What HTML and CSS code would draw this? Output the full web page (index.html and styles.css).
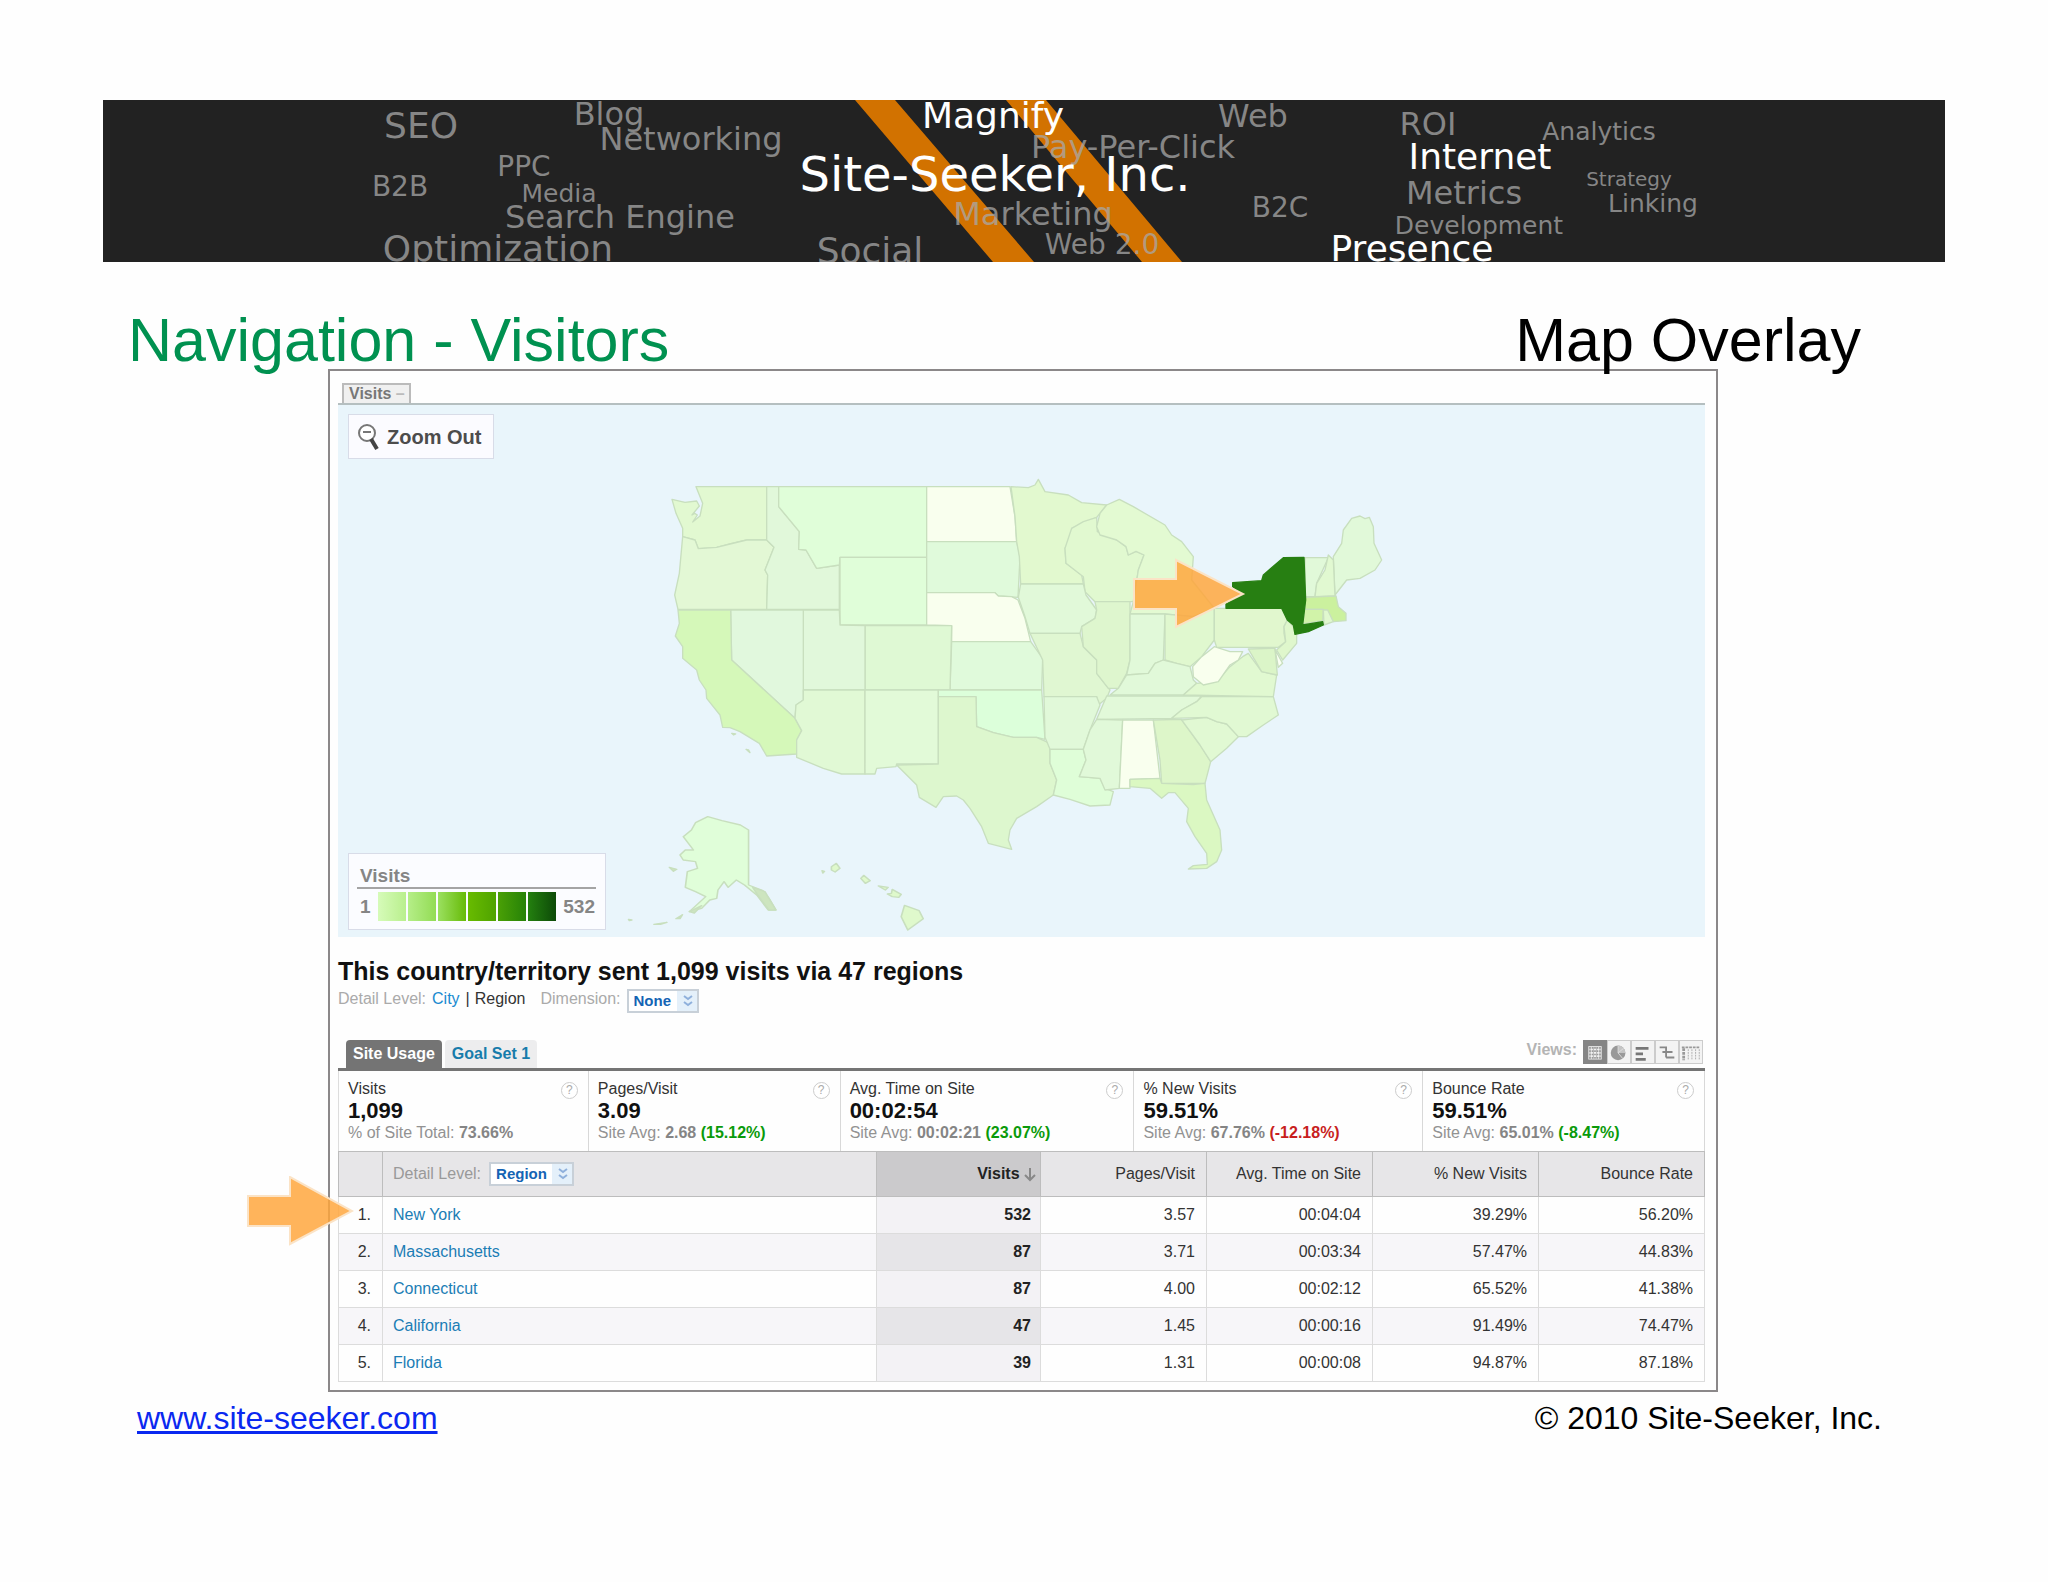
FILE: index.html
```html
<!DOCTYPE html>
<html lang="en">
<head>
<meta charset="utf-8">
<meta name="viewport" content="width=device-width, initial-scale=1">
<title>Navigation - Visitors: Map Overlay</title>
<link rel="stylesheet" href="styles.css">
</head>
<body>
<header class="banner">
<svg class="banner-art" viewBox="0 0 1842 162" role="img" aria-label="Site-Seeker, Inc.">
<path class="stripe" d="M752 0H792L931 162H890ZM903 0H943L1079 162H1039Z"/>
<g class="cloud">
<text class="w5" x="318" y="38">SEO</text>
<text class="w4" x="506" y="25">Blog</text>
<text class="w4" x="588" y="50">Networking</text>
<text class="w4" x="1150" y="27">Web</text>
<text class="w4" x="1325" y="35">ROI</text>
<text class="w2" x="1496" y="40">Analytics</text>
<text class="w3" x="421" y="76">PPC</text>
<text class="w4" x="1030" y="58">Pay-Per-Click</text>
<text class="w3" x="297" y="96">B2B</text>
<text class="w2" x="456" y="102">Media</text>
<text class="w4" x="1361" y="104">Metrics</text>
<text class="w1" x="1526" y="86">Strategy</text>
<text class="w4" x="517" y="128">Search Engine</text>
<text class="w4" x="930" y="125">Marketing</text>
<text class="w3" x="1177" y="117">B2C</text>
<text class="w2" x="1550" y="112">Linking</text>
<text class="w2" x="1376" y="134">Development</text>
<text class="w5" x="395" y="161">Optimization</text>
<text class="w5" x="767" y="163">Social</text>
<text class="w3" x="999" y="154">Web 2.0</text>
</g>
<g class="cloud cloud-strong">
<text class="w5" x="890" y="28">Magnify</text>
<text class="w5" x="1377" y="69">Internet</text>
<text class="w6" x="892" y="91">Site-Seeker, Inc.</text>
<text class="w5" x="1309" y="161">Presence</text>
</g>
</svg>
</header>

<div class="titles">
<h1 class="title-section">Navigation - Visitors</h1>
<p class="title-page">Map Overlay</p>
</div>

<main class="report">
<div class="metric-bar"><button class="metric-tab" type="button">Visits <span class="dash">–</span></button></div>

<section class="map" aria-label="Visits by region">
<svg class="map-art" viewBox="338 405 1367 532" aria-hidden="true">
<g class="states" transform="translate(650 460) scale(.33333)">
<path fill="#e2f9d1" d="M138 80H350V240H290L240 252L200 262L145 266L135 240L98 230V205L78 160L66 118L105 127L140 123L148 138L126 165L134 160L142 165L128 186L150 168L158 130Z"/>
<path fill="#e3f8d5" d="M98 230L135 240L145 266L200 262L240 252L290 240H350L372 262L345 330L353 345L350 448H84L74 405L88 340Z"/>
<path fill="#e1f8da" d="M350 80H386V140L448 215L446 268L468 270L500 325L568 315V448H350L353 345L345 330L372 262L350 240Z"/>
<path fill="#e0fed9" d="M386 80H830V292H570L568 315L500 325L468 270L446 268L448 215L386 140Z"/>
<path fill="#e0fed9" d="M570 292H830V495H570Z"/>
<path fill="#f9ffee" d="M830 80H1080L1095 170L1100 245H830Z"/>
<path fill="#e0fadb" d="M830 245H1100L1110 290L1104 412L1045 408L1035 398H830Z"/>
<path fill="#f9ffee" d="M830 398H1035L1045 408L1085 410L1104 420L1125 475L1142 545H905V497L830 495Z"/>
<path fill="#e0fadb" d="M905 545H1142L1178 595L1175 690H900Z"/>
<path fill="#dff9d4" d="M645 497H905L900 690H645Z"/>
<path fill="#e1f8db" d="M460 450H568L570 495L645 497V690H460Z"/>
<path fill="#e1f8dd" d="M242 450H460V720L438 735L435 775L245 600Z"/>
<path fill="#d5f8b9" d="M84 450H242L245 600L435 775L455 812L440 840V882L350 888L328 850L270 815L240 803L218 802L210 765L170 715L168 690L148 660L140 630L98 595V560L76 528L88 490Z"/>
<path fill="#e1f9d5" d="M460 690H645V942H575L520 925L440 892V840L455 812L435 775L438 735L460 720Z"/>
<path fill="#e2fad8" d="M645 690H865V912H740L738 920L680 925L675 942H645Z"/>
<path fill="#dcffda" d="M865 690H1175L1185 838L1160 832H1090L1030 818L980 800L978 710H865Z"/>
<path fill="#ddf7ce" d="M865 710H978L980 800L1030 818L1090 832H1160L1200 850V910L1220 960L1210 1005L1160 1040L1100 1075L1080 1110L1075 1140L1085 1168L1015 1150L995 1100L960 1045L940 1020L920 1008L880 1010L858 1042L808 1012L800 975L740 915L865 912Z"/>
<path fill="#c9dfbf" d="M245 820l12 2-6 3zM288 868l8 2 4 8z"/>
</g>
<g class="states" transform="translate(1000 460) scale(.33333)">
<path fill="#e2f9cf" d="M33 80L85 83L105 75L115 58L135 95L205 105L245 128L320 135L290 172L215 205V230L195 265L198 310L245 345L250 372H62L58 290L50 245L45 170Z"/>
<path fill="#e1f9d0" d="M215 205L250 185L290 172L292 215L350 240L378 260L385 285L408 274L432 285L415 330L400 425H285L255 395L250 350L198 310L195 265Z"/>
<path fill="#e3fad2" d="M320 135L358 118L400 140L495 195L515 225L545 245L580 290L575 360L643 445L580 470L490 462H390L400 425L415 330L432 285L408 274L385 285L378 260L350 240L300 225L290 200L300 160Z"/>
<path fill="#e1f9d9" d="M62 372H250L258 405L290 450L285 475L245 500L240 520H90L75 470L55 412Z"/>
<path fill="#e0f7d2" d="M90 520H240L250 560L290 600V640L330 690L320 715L295 735L290 710H132L128 600Z"/>
<path fill="#def6ce" d="M285 425H390V600L380 640L355 685H325L290 640V600L250 560L245 500L285 475L290 450Z"/>
<path fill="#e1f9d9" d="M390 462H495L490 600L465 610L445 640L380 645L390 600Z"/>
<path fill="#e0f8cf" d="M495 462L580 470L643 445V540L605 590L570 620L530 610L495 600Z"/>
<path fill="#e1f9d9" d="M355 685L380 645L445 640L465 610L490 600L530 610L570 620L580 660L590 670L550 705H330Z"/>
<path fill="#e2f9d9" d="M320 708H605L590 725L545 750L515 775L290 778Z"/>
<path fill="#e1f9d9" d="M132 710H290L300 735L270 810L250 868H150L135 832Z"/>
<path fill="#dffed8" d="M150 868H250L258 900L238 950L300 955L315 985L340 995L330 1035L270 1038L210 1018L160 1005L170 960L150 910Z"/>
<path fill="#e1f9d9" d="M290 778L368 780L358 985L315 990L300 955L238 950L258 900L250 868L270 810Z"/>
<path fill="#f9ffee" d="M368 780H460L480 955L390 958V985H358Z"/>
<path fill="#ddf6c9" d="M460 780L545 778L600 855L632 905L615 970H485L480 900Z"/>
<path fill="#dbf8c2" d="M390 958L480 955L485 970L580 974L615 970L620 1020L660 1110L665 1170L650 1205L620 1225L565 1227L580 1217L622 1213L620 1180L585 1130L560 1085L565 1045L525 998L505 998L485 1015L450 985L390 980Z"/>
<path fill="#e1f9d3" d="M545 780L620 772L650 785L680 792L715 830L680 865L632 905L600 855Z"/>
<path fill="#e1f9d3" d="M605 710H820L835 765L790 795L740 830H715L680 792L650 785L620 772L515 775L545 750L590 725Z"/>
<path fill="#e1f9d1" d="M550 705L590 670L650 665L690 620L728 590L745 580L785 635L830 645L820 710Z"/>
<path fill="#f9ffee" d="M643 560L690 575L728 575L715 600L690 615L655 665L610 675L580 650L578 620L605 590Z"/>
<path fill="#e1f7ce" d="M643 445H845L862 480L852 500V520L857 545L835 562H650L643 540Z"/>
<path fill="#dff7cc" d="M862 480L890 510V550L848 600L830 570L857 545L852 500Z"/>
<path fill="#dbf5c8" d="M745 567L825 565L832 645L785 635Z"/>
<path fill="#fafff4" d="M825 568L848 610L835 622Z"/>
<path fill="#e1f9d9" d="M915 293H985L950 370L945 410H915ZM1000 290L1025 250L1030 210L1055 175L1080 168L1095 176L1108 172L1120 200L1122 250L1145 300L1125 330L1080 355L1040 360L1005 405Z"/>
<path fill="#e1f9d1" d="M985 285L1000 300L1005 408L945 410L950 370L975 330Z"/>
<path fill="#cbf19e" d="M915 412L1008 408L1015 440L1038 460V482L1000 485L970 448H915Z"/>
<path fill="#d1f3a9" d="M912 448H970L968 482L910 492Z"/>
<path fill="#e0f8cf" d="M970 450H983L1000 485L972 495Z"/>
<path class="state-top" d="M698 368L785 362L790 345L850 293L912 292L917 420L908 495L968 485L970 495L925 515L885 523L880 495L862 480L845 445H678V432L730 402L698 380Z"/>
</g>
<g class="states" fill="#e0fed9" transform="translate(320 800) scale(.40816 .33333)">
<path d="M950 50L985 62L1030 75L1050 90V255L1085 272L1100 295L1117 330H1098L1070 285L1040 255L1020 240L1000 262L990 245L975 270L972 295L955 300L935 325L905 335L945 290L920 275L895 262L900 215L925 205L920 185L890 180L882 165L895 150L915 150L890 110L910 90L920 68Z"/>
<path fill="#cde5bf" d="M1060 262L1090 275L1117 330H1100L1075 290ZM905 335l30-18-18 22zM872 356l16-12-6 12zM818 373l32-6-16 6zM756 358l8 2-6 2zM856 202l18 6-8 6z"/>
<path fill="#dff9cc" d="M1253 200L1265 190L1274 205L1262 216L1253 210ZM1325 235L1332 226L1348 242L1336 250ZM1368 258L1392 262L1385 270ZM1390 282L1400 280L1402 268L1424 283L1418 292L1402 290ZM1432 316L1468 332L1478 356L1440 390L1424 350ZM1230 212l6 2-4 5z"/>
</g>
<path class="pointer" d="M1134 579H1176V560L1243 594L1176 627V609H1134Z"/>
</svg>
<button class="zoom-out" type="button">
<svg width="24" height="28" viewBox="0 0 24 28" aria-hidden="true"><circle cx="10" cy="10" r="8" fill="#fff" stroke="#777" stroke-width="2"/><path d="M6 9H14" stroke="#777" stroke-width="2"/><path d="M14 16L20 26" stroke="#444" stroke-width="4"/></svg>
Zoom Out</button>
<div class="legend">
<div class="legend-title">Visits</div>
<div class="legend-scale"><span>1</span><span class="ramp"><i class="s1"></i><i class="s2"></i><i class="s3"></i><i class="s4"></i><i class="s5"></i><i class="s6"></i></span><span>532</span></div>
</div>
</section>

<h2 class="summary">This country/territory sent 1,099 visits via 47 regions</h2>
<div class="levels">
<span class="muted">Detail Level:</span><a class="city" href="#city">City</a><span class="bar">|</span><span class="current">Region</span>
<label class="muted dim" for="dimension">Dimension:</label>
<span class="picker"><select id="dimension"><option>None</option></select><svg class="chevrons" viewBox="0 0 10 12" aria-hidden="true"><path d="M1 1L5 4L9 1M1 7L5 10L9 7"/></svg></span>
</div>

<div class="tabs">
<button class="tab tab-on" type="button">Site Usage</button>
<button class="tab" type="button">Goal Set 1</button>
<div class="views"><span>Views:</span>
<button class="view view-on" type="button" aria-label="Table"><svg viewBox="0 0 24 24"><path fill="#f2f2f2" d="M4 5H20V21H4Z"/><path stroke="#999" stroke-width="2" stroke-dasharray="2 1" fill="none" d="M5 7H19M5 11H19M5 15H19M5 19H19"/><path stroke="#a4a4a4" fill="none" d="M6 6V20M10 6V20M14 6V20M18 6V20"/></svg></button>
<button class="view" type="button" aria-label="Percentage"><svg viewBox="0 0 24 24"><circle cx="11" cy="13" r="8" fill="#999"/><path fill="#c4c4c4" d="M11 13V5A8 8 0 0 1 19 13Z"/><path stroke="#ddd" fill="none" d="M11 5V13L17 8M11 13L16 19"/></svg></button>
<button class="view" type="button" aria-label="Performance"><svg viewBox="0 0 24 24"><path stroke="#777" stroke-width="3" d="M4 8H18M4 14H12M4 20H15"/></svg></button>
<button class="view" type="button" aria-label="Comparison"><svg viewBox="0 0 24 24"><path stroke="#888" stroke-width="2" fill="none" d="M4 7H12M11 7V18M7 12H18M11 18H20"/></svg></button>
<button class="view" type="button" aria-label="Pivot"><svg viewBox="0 0 24 24"><path stroke="#999" stroke-width="2" stroke-dasharray="3 1" fill="none" d="M2 7H22"/><path stroke="#999" stroke-width="3" stroke-dasharray="3 1" d="M4 8V21"/><path stroke="#aaa" stroke-dasharray="2 1" fill="none" d="M9 9V21M13 9V21M17 9V21M21 9V21"/></svg></button>
</div>
</div>

<div class="stats">
<div class="stat"><div class="name">Visits</div><div class="value">1,099</div><div class="note">% of Site Total: <b>73.66%</b></div><button class="help" type="button">?</button></div>
<div class="stat"><div class="name">Pages/Visit</div><div class="value">3.09</div><div class="note">Site Avg: <b>2.68 <span class="up">(15.12%)</span></b></div><button class="help" type="button">?</button></div>
<div class="stat"><div class="name">Avg. Time on Site</div><div class="value">00:02:54</div><div class="note">Site Avg: <b>00:02:21 <span class="up">(23.07%)</span></b></div><button class="help" type="button">?</button></div>
<div class="stat"><div class="name">% New Visits</div><div class="value">59.51%</div><div class="note">Site Avg: <b>67.76% <span class="down">(-12.18%)</span></b></div><button class="help" type="button">?</button></div>
<div class="stat"><div class="name">Bounce Rate</div><div class="value">59.51%</div><div class="note">Site Avg: <b>65.01% <span class="up">(-8.47%)</span></b></div><button class="help" type="button">?</button></div>
</div>

<div class="table-wrap">
<table class="regions">
<colgroup><col class="c-rank"><col><col class="c-sorted"><col class="c-num"><col class="c-num"><col class="c-num"><col class="c-num"></colgroup>
<thead><tr><th></th><th class="left"><div class="level-pick"><label class="muted" for="level">Detail Level:</label><span class="picker"><select id="level"><option>Region</option></select><svg class="chevrons" viewBox="0 0 10 12" aria-hidden="true"><path d="M1 1L5 4L9 1M1 7L5 10L9 7"/></svg></span></div></th><th class="sorted">Visits <svg width="12" height="14" viewBox="0 0 12 14" aria-hidden="true"><path d="M6 0V12M1 7L6 12L11 7" fill="none" stroke="#888" stroke-width="2"/></svg></th><th>Pages/Visit</th><th>Avg. Time on Site</th><th>% New Visits</th><th>Bounce Rate</th></tr></thead>
<tbody>
<tr><td>1.</td><td class="left"><a href="#ny">New York</a></td><td class="sorted">532</td><td>3.57</td><td>00:04:04</td><td>39.29%</td><td>56.20%</td></tr>
<tr><td>2.</td><td class="left"><a href="#ma">Massachusetts</a></td><td class="sorted">87</td><td>3.71</td><td>00:03:34</td><td>57.47%</td><td>44.83%</td></tr>
<tr><td>3.</td><td class="left"><a href="#ct">Connecticut</a></td><td class="sorted">87</td><td>4.00</td><td>00:02:12</td><td>65.52%</td><td>41.38%</td></tr>
<tr><td>4.</td><td class="left"><a href="#ca">California</a></td><td class="sorted">47</td><td>1.45</td><td>00:00:16</td><td>91.49%</td><td>74.47%</td></tr>
<tr><td>5.</td><td class="left"><a href="#fl">Florida</a></td><td class="sorted">39</td><td>1.31</td><td>00:00:08</td><td>94.87%</td><td>87.18%</td></tr>
</tbody>
</table>
<svg class="row-pointer" width="108" height="70" viewBox="0 0 108 70" aria-hidden="true"><path class="pointer" d="M2 20H44V1L106 35L44 68V50H2Z"/></svg>
</div>
</main>

<footer class="footer"><a href="#home">www.site-seeker.com</a><span>© 2010 Site-Seeker, Inc.</span></footer>
</body>
</html>
```
FILE: styles.css
```css
* { box-sizing: border-box; }
body { margin: 0; padding-bottom: 100px; background: #fefefe; color: #333; font: 16px/20px "Liberation Sans", Arial, sans-serif; }
button, select { font: inherit; color: inherit; margin: 0; }
h1, h2, p { margin: 0; font-weight: normal; }

.banner { margin: 100px 103px 0; background: #222; }
.banner-art { display: block; width: 100%; overflow: hidden; }
.stripe { fill: #d27200; }
.cloud { fill: #a8a8a8; fill-opacity: .75; font-family: "DejaVu Sans", sans-serif; text-anchor: middle; }
.cloud-strong { fill: #fff; fill-opacity: 1; }
.w1 { font-size: 20px; }
.w2 { font-size: 25px; }
.w3 { font-size: 28px; }
.w4 { font-size: 32px; }
.w5 { font-size: 36px; }
.w6 { font-size: 48px; }

.titles { position: relative; z-index: 1; display: flex; justify-content: space-between; padding: 50px 187px 0 128px; font-size: 61px; line-height: 57px; }
.title-section { font-size: inherit; color: #009150; }
.title-page { color: #000; }

.report { margin: 0 330px 0 328px; padding: 12px 11px 8px 8px; border: 2px solid #8b8889; }
.metric-bar { display: flex; padding-left: 4px; border-bottom: 2px solid #b5bfc0; }
.metric-tab { height: 20px; padding: 0 4px 0 5px; border: 2px solid #bbb; border-bottom: 0; background: #f0f0f0; color: #777; font-size: 16px; font-weight: bold; line-height: 18px; }
.dash { color: #bbb; }

.map { position: relative; background: #e9f5fb; }
.map-art { display: block; width: 100%; }
.states { stroke: #c8dfbe; stroke-width: 4; stroke-linejoin: round; }
.state-top { fill: #277f12; stroke: #277f12; }
.pointer { fill: #ffa63c; fill-opacity: .84; stroke: #fbe3c6; stroke-width: 2; }
.zoom-out { position: absolute; left: 10px; top: 9px; display: flex; align-items: center; gap: 6px; height: 45px; padding: 0 12px 0 8px; border: 1px solid #d8dce8; background: #fbfbff; color: #4c4c4c; font-size: 20px; font-weight: bold; }
.legend { position: absolute; left: 10px; bottom: 7px; width: 258px; height: 77px; padding: 12px 9px 0 8px; border: 1px solid #d8dce8; background: #fbfcff; color: #858585; font-size: 19px; font-weight: bold; }
.legend-title { height: 23px; padding-left: 3px; border-bottom: 2px solid #a4a4a4; }
.legend-scale { display: flex; align-items: center; justify-content: space-between; padding: 3px 1px 0 3px; line-height: 29px; }
.ramp { display: flex; gap: 2px; }
.ramp i { width: 28px; height: 29px; }
.s1 { background: linear-gradient(90deg, #d6fbb9, #b9ef8d); }
.s2 { background: linear-gradient(90deg, #b5ee88, #93dc55); }
.s3 { background: linear-gradient(90deg, #9be060, #67bb08); }
.s4 { background: linear-gradient(90deg, #68bb00, #4fa300); }
.s5 { background: linear-gradient(90deg, #4aa006, #268207); }
.s6 { background: linear-gradient(90deg, #24800f, #0d4a08); }

.summary { margin-top: 19px; color: #111; font-size: 25px; font-weight: bold; line-height: 30px; }
.levels { display: flex; margin-top: 3px; }
.muted { color: #aaa; }
a { color: #1b7db5; text-decoration: none; }
.levels .city { margin-left: 6px; color: #1a8ad0; }
.bar { margin: 0 5px 0 6px; }
.dim { margin: 0 6px 0 15px; }
.picker { position: relative; display: inline-block; height: 24px; }
.picker select { height: 24px; padding: 0 25px 0 5px; border: 2px solid #c8d0d8; border-radius: 0; appearance: none; background: linear-gradient(90deg, #fff calc(100% - 20px), #e4f0fa calc(100% - 20px)); color: #1464b4; font-size: 15px; font-weight: bold; line-height: 20px; }
.chevrons { position: absolute; right: 6px; top: 6px; width: 10px; height: 12px; fill: none; stroke: #8fb0dc; stroke-width: 2; pointer-events: none; }

.tabs { display: flex; gap: 3px; height: 31px; margin-top: 27px; padding-left: 8px; border-bottom: 3px solid #747474; }
.tab { height: 28px; padding: 0 7px; border: 0; border-radius: 4px 4px 0 0; background: #ededee; color: #177cab; font-weight: bold; }
.tab-on { background: #747474; color: #fff; }
.views { display: flex; margin-left: auto; padding-right: 2px; color: #b4b4b4; font-weight: bold; }
.views span { margin-right: 6px; }
.view { width: 24px; height: 24px; padding: 0; border: 1px solid #ccc; background: #f3f3f3; }
.view svg { display: block; width: 100%; height: 100%; }
.view-on { border: 2px solid #858585; background: #858585; }

.stats { display: grid; grid-template-columns: 250fr 252fr 294fr 289fr 282fr; border-left: 1px solid #ddd; }
.stat { position: relative; padding: 8px 0 8px 9px; border-right: 1px solid #d8d8d8; white-space: nowrap; }
.value { color: #111; font-size: 22px; font-weight: bold; line-height: 24px; }
.note { color: #929292; }
.note b { color: #858585; }
.note .up { color: #0a9a0a; }
.note .down { color: #c81e1e; }
.help { position: absolute; right: 10px; top: 11px; width: 17px; height: 17px; padding: 0; border: 1px solid #ccc; border-radius: 50%; background: #fff; color: #aaa; font-size: 12px; line-height: 15px; }

.table-wrap { position: relative; }
.regions { width: 100%; table-layout: fixed; border-collapse: collapse; }
.c-rank { width: 44px; }
.c-sorted { width: 164px; }
.c-num { width: 166px; }
.regions th, .regions td { height: 37px; padding: 0 11px; border: 1px solid #dcdcdc; font-weight: normal; text-align: right; white-space: nowrap; }
.regions th { height: 45px; border-color: #bdbdbd; background: #e7e6e8; }
.regions .left { padding-left: 10px; text-align: left; }
.regions tbody tr:nth-child(even) { background: #f7f6f9; }
.regions td.sorted { padding-right: 9px; border-top-color: #e4e4e6; background: #f3f2f5; color: #222; font-weight: bold; }
.regions tr:nth-child(even) td.sorted { background: #e6e5e8; }
.regions th.sorted { padding-right: 4px; background: #cbcacc; color: #222; font-weight: bold; }
.sorted svg { vertical-align: -3px; }
.level-pick { display: flex; align-items: center; gap: 8px; }
.level-pick .muted { color: #999; }
.row-pointer { position: absolute; left: -92px; top: 25px; }

.footer { display: flex; justify-content: space-between; padding: 6px 166px 0 137px; color: #000; font-size: 32px; line-height: 40px; }
.footer a { color: #0a28f0; text-decoration: underline; }
```
